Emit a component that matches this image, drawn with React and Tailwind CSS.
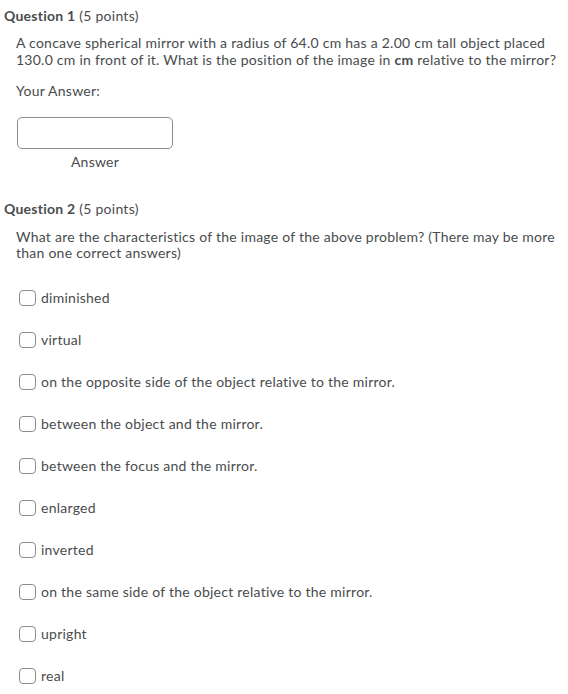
export default function App() {
  const options = [
    "diminished",
    "virtual",
    "on the opposite side of the object relative to the mirror.",
    "between the object and the mirror.",
    "between the focus and the mirror.",
    "enlarged",
    "inverted",
    "on the same side of the object relative to the mirror.",
    "upright",
    "real",
  ];

  return (
    <div className="min-h-[694px] bg-white text-[14px] leading-[17px] tracking-[0.25px] text-[#494c4e] font-['Lato',sans-serif]">
      {/* Question 1 */}
      <div className="pt-[7px] pl-[4px]">
        <h2>
          <span className="font-bold">Question 1</span> (5 points)
        </h2>
        <div className="pl-[12px] pt-[10px]">
          <p>
            A concave spherical mirror with a radius of 64.0 cm has a 2.00 cm tall object placed
            <br />
            130.0 cm in front of it. What is the position of the image in <b>cm</b> relative to the mirror?
          </p>
          <p className="pt-[14px]">Your Answer:</p>
          <div className="pt-[18px] pl-[1px] w-[157px] flex flex-col items-center">
            <input
              className="w-[156px] h-[32px] rounded-[5px] border border-[#8a8d8f] bg-white"
              type="text"
            />
            <span className="pt-[4px]">Answer</span>
          </div>
        </div>
      </div>

      {/* Question 2 */}
      <div className="pt-[30px] pl-[4px]">
        <h2>
          <span className="font-bold">Question 2</span> (5 points)
        </h2>
        <div className="pl-[12px] pt-[12px]">
          <p className="leading-[16px]">
            What are the characteristics of the image of the above problem? (There may be more
            <br />
            than one correct answers)
          </p>
          <ul className="pt-[28px] pl-[3px] flex flex-col gap-[25px]">
            {options.map((opt) => (
              <li key={opt} className="flex items-center gap-[5px]">
                <span className="w-[17px] h-[16px] shrink-0 rounded-[4px] border border-[#8a8d8f] bg-white" />
                <span>{opt}</span>
              </li>
            ))}
          </ul>
        </div>
      </div>
    </div>
  );
}
